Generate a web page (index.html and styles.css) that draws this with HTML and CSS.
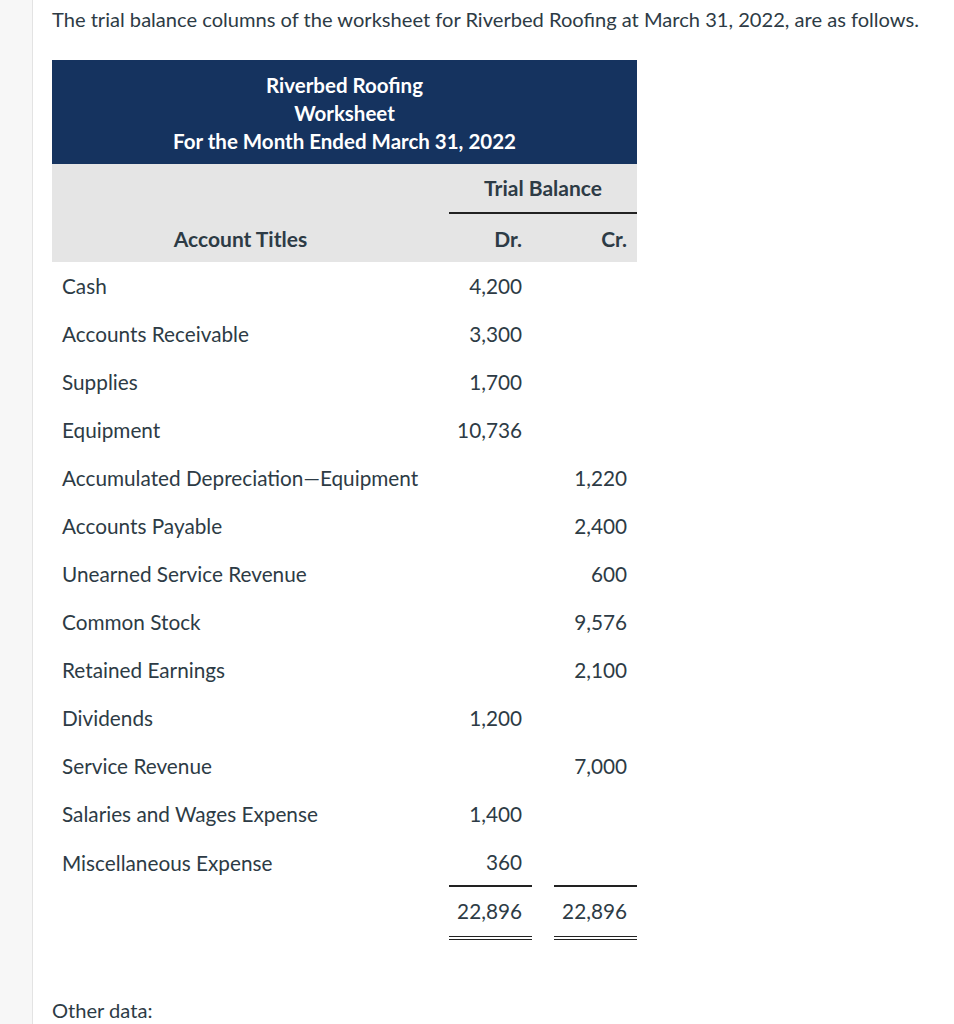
FILE: index.html
```html
<!DOCTYPE html>
<html>
<head>
<meta charset="utf-8">
<link rel="stylesheet" href="styles.css">
</head>
<body>
<div class="page">
  <aside class="rail"></aside>
  <main class="content">
    <p class="intro">The trial balance columns of the worksheet for Riverbed Roofing at March 31, 2022, are as follows.</p>
    <div class="sheet">
      <div class="title">
        <div>Riverbed Roofing</div>
        <div>Worksheet</div>
        <div>For the Month Ended March 31, 2022</div>
      </div>
      <div class="colhead">
        <div class="tb-label">Trial Balance</div>
        <div class="acct-label">Account Titles</div>
        <div class="dr-label">Dr.</div>
        <div class="cr-label">Cr.</div>
      </div>
      <div class="rows">
        <div class="row"><span class="acct">Cash</span><span class="num">4,200</span><span class="num cr"></span></div>
        <div class="row"><span class="acct">Accounts Receivable</span><span class="num">3,300</span><span class="num cr"></span></div>
        <div class="row"><span class="acct">Supplies</span><span class="num">1,700</span><span class="num cr"></span></div>
        <div class="row"><span class="acct">Equipment</span><span class="num">10,736</span><span class="num cr"></span></div>
        <div class="row"><span class="acct">Accumulated Depreciation—Equipment</span><span class="num"></span><span class="num cr">1,220</span></div>
        <div class="row"><span class="acct">Accounts Payable</span><span class="num"></span><span class="num cr">2,400</span></div>
        <div class="row"><span class="acct">Unearned Service Revenue</span><span class="num"></span><span class="num cr">600</span></div>
        <div class="row"><span class="acct">Common Stock</span><span class="num"></span><span class="num cr">9,576</span></div>
        <div class="row"><span class="acct">Retained Earnings</span><span class="num"></span><span class="num cr">2,100</span></div>
        <div class="row"><span class="acct">Dividends</span><span class="num">1,200</span><span class="num cr"></span></div>
        <div class="row"><span class="acct">Service Revenue</span><span class="num"></span><span class="num cr">7,000</span></div>
        <div class="row"><span class="acct">Salaries and Wages Expense</span><span class="num">1,400</span><span class="num cr"></span></div>
        <div class="row last"><span class="acct">Miscellaneous Expense</span><span class="num">360</span><span class="num cr"></span></div>
        <div class="row total"><span class="acct"></span><span class="num">22,896</span><span class="num cr">22,896</span></div>
      </div>
    </div>
    <p class="other">Other data:</p>
  </main>
</div>
</body>
</html>
```

FILE: styles.css
```css
html, body {
  margin: 0;
  padding: 0;
  background: #ffffff;
}
body {
  font-family: Lato, "Noto Sans", sans-serif;
  color: #2d3b45;
}
.page {
  display: flex;
  min-height: 1024px;
}
.rail {
  width: 32px;
  flex: none;
  background: #f7f7f7;
  border-right: 1px solid #e3e3e3;
}
.content {
  padding-left: 19px;
  flex: 1;
}
.intro {
  margin: 7px 0 0;
  font-size: 20.1px;
  line-height: 24px;
}
.sheet {
  margin-top: 29px;
  width: 585px;
}
.title {
  background: #15335f;
  color: #ffffff;
  font-weight: bold;
  font-size: 20.5px;
  line-height: 28px;
  text-align: center;
  padding: 11px 0 9px;
}
.colhead {
  background: #e5e5e5;
  display: grid;
  grid-template-columns: 397px 83px 22px 83px;
  grid-template-rows: 50px 48px;
  font-weight: bold;
  font-size: 21px;
}
.tb-label {
  grid-column: 2 / 5;
  grid-row: 1;
  text-align: center;
  align-self: stretch;
  padding-top: 11px;
  box-sizing: border-box;
  border-bottom: 2px solid #222;
}
.acct-label {
  grid-column: 1;
  grid-row: 2;
  text-align: center;
  padding-right: 20px;
  padding-top: 12px;
}
.dr-label {
  grid-column: 2;
  grid-row: 2;
  text-align: right;
  padding-right: 10px;
  padding-top: 12px;
}
.cr-label {
  grid-column: 4;
  grid-row: 2;
  text-align: right;
  padding-right: 10px;
  padding-top: 12px;
}
.rows {
  display: flex;
  flex-direction: column;
}
.row {
  display: grid;
  grid-template-columns: 397px 83px 22px 83px;
  height: 48px;
  align-items: center;
  font-size: 20.75px;
}
.acct {
  padding-left: 10px;
}
.num {
  text-align: right;
  padding-right: 10px;
}
.num.cr {
  grid-column: 4;
}
.row.last {
  height: 49px;
}
.row.last .num {
  align-self: stretch;
  display: flex;
  align-items: center;
  justify-content: flex-end;
  border-bottom: 2px solid #222;
  box-sizing: border-box;
  padding-top: 0;
}
.row.total {
  height: 53px;
}
.row.total .num {
  align-self: stretch;
  display: flex;
  align-items: center;
  justify-content: flex-end;
  border-bottom: 4px double #222;
  box-sizing: border-box;
  padding-bottom: 1px;
}
.other {
  margin: 58px 0 0;
  font-size: 20.1px;
  line-height: 24px;
}
```
